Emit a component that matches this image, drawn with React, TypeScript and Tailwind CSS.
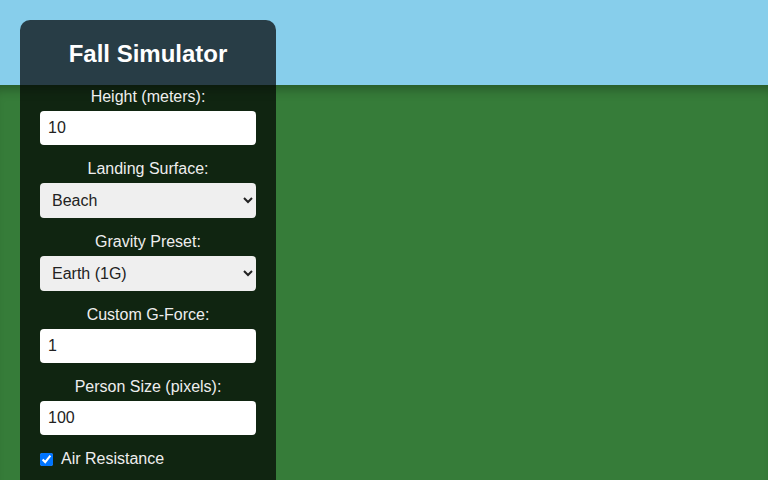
import { useState } from "react";

const fieldClass =
  "block w-full h-[34px] rounded px-2 text-base text-[#222] bg-white border-0 outline-none";
const selectClass =
  "block w-full h-[35px] rounded px-2 text-base text-[#222] bg-[#efefef] border-0 outline-none";

function Field({ label, children }: { label: string; children: React.ReactNode }) {
  return (
    <div className="mb-[14px]">
      <label className="block text-center text-base leading-[20px] text-[#eee] mb-[4px]">{label}</label>
      {children}
    </div>
  );
}

export default function App() {
  const [height, setHeight] = useState("10");
  const [surface, setSurface] = useState("beach");
  const [gravity, setGravity] = useState("earth");
  const [gForce, setGForce] = useState("1");
  const [size, setSize] = useState("100");
  const [airResistance, setAirResistance] = useState(true);

  return (
    <div
      className="relative w-[768px] h-[480px] overflow-hidden"
      style={{ fontFamily: '"Liberation Sans", Arial, sans-serif' }}
    >
      {/* Scene: sky and ground */}
      <div className="flex flex-col h-full">
        <div className="h-[85px] bg-[#87ceeb]" />
        <div className="flex-1 bg-[#367c39] shadow-[inset_0_12px_12px_-8px_rgba(0,0,0,0.3)]" />
      </div>

      {/* Controls panel */}
      <div className="absolute left-5 top-5 w-64 rounded-[10px] bg-black/70 p-5">
        <h2 className="text-center text-2xl leading-7 font-bold text-white mb-[19px]">Fall Simulator</h2>

        <Field label="Height (meters):">
          <input
            type="number"
            value={height}
            onChange={(e) => setHeight(e.target.value)}
            className={fieldClass}
          />
        </Field>

        <Field label="Landing Surface:">
          <select value={surface} onChange={(e) => setSurface(e.target.value)} className={selectClass}>
            <option value="beach">Beach</option>
            <option value="grass">Grass</option>
            <option value="concrete">Concrete</option>
            <option value="water">Water</option>
          </select>
        </Field>

        <Field label="Gravity Preset:">
          <select value={gravity} onChange={(e) => setGravity(e.target.value)} className={selectClass}>
            <option value="earth">Earth (1G)</option>
            <option value="moon">Moon (0.16G)</option>
            <option value="mars">Mars (0.38G)</option>
            <option value="jupiter">Jupiter (2.5G)</option>
          </select>
        </Field>

        <Field label="Custom G-Force:">
          <input
            type="number"
            value={gForce}
            onChange={(e) => setGForce(e.target.value)}
            className={fieldClass}
          />
        </Field>

        <Field label="Person Size (pixels):">
          <input
            type="number"
            value={size}
            onChange={(e) => setSize(e.target.value)}
            className={fieldClass}
          />
        </Field>

        <label className="flex items-center gap-2 text-base text-[#eee] -mt-[2px]">
          <input
            type="checkbox"
            checked={airResistance}
            onChange={(e) => setAirResistance(e.target.checked)}
            className="w-[13px] h-[13px] m-0"
          />
          Air Resistance
        </label>
      </div>
    </div>
  );
}
